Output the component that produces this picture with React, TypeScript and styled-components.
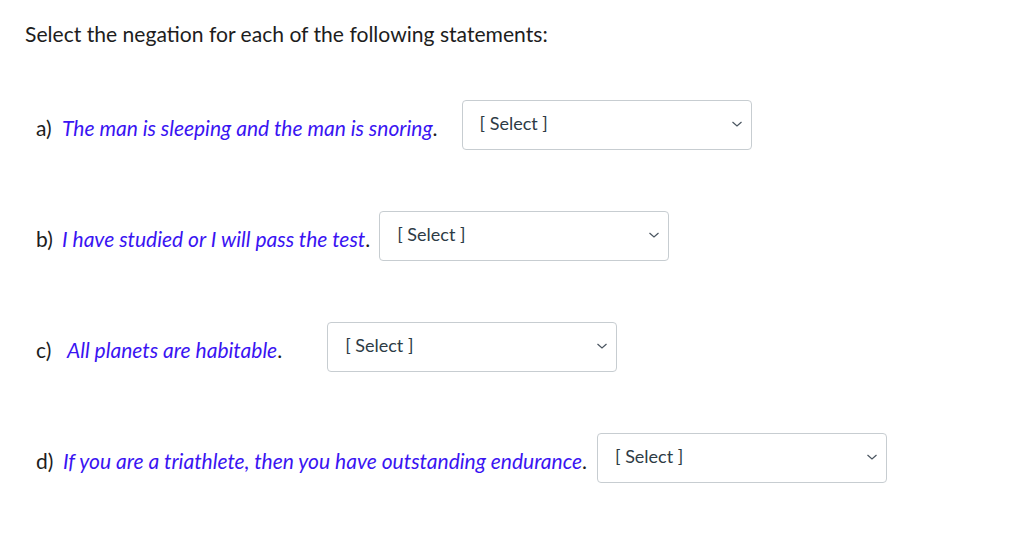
import React from "react";
import styled, { createGlobalStyle } from "styled-components";

const GlobalStyle = createGlobalStyle`
  html, body {
    margin: 0;
    padding: 0;
    background: #ffffff;
  }
  body {
    font-family: Lato, "Open Sans", "Liberation Sans", sans-serif;
    color: #2d3b45;
  }
`;

const Page = styled.div`
  padding: 22px 0 0 25px;
  display: flex;
  flex-direction: column;
`;

const Title = styled.div`
  font-size: 21.1px;
  line-height: 24px;
  color: #1d1d1d;
  margin-bottom: 54px;
`;

const List = styled.div`
  display: flex;
  flex-direction: column;
  gap: 61px;
  padding-left: 11px;
`;

const Row = styled.div`
  display: flex;
  align-items: flex-start;
`;

const Label = styled.div`
  display: flex;
  padding-top: 16px;
  font-size: 21px;
  line-height: 24px;
  color: #1d1d1d;
  white-space: nowrap;
`;

const Marker = styled.span<{ $w: number }>`
  display: inline-block;
  width: ${(p) => p.$w}px;
`;

const Statement = styled.em`
  font-style: italic;
  color: #3a14f2;
`;

const SelectBox = styled.div<{ $gap: number }>`
  box-sizing: border-box;
  margin-left: ${(p) => p.$gap}px;
  width: 290px;
  height: 50px;
  border: 1px solid #c7cdd1;
  border-radius: 4px;
  background: #ffffff;
  display: flex;
  align-items: flex-start;
  justify-content: space-between;
  padding: 10px 8px 0 17px;
  font-size: 18px;
  line-height: 24px;
  color: #2d3b45;
`;

const Chevron = styled.svg`
  margin-top: 9px;
  width: 12px;
  height: 8px;
`;

type Item = { key: string; text: string; marker: number; gap: number };

const items: Item[] = [
  { key: "a)", text: "The man is sleeping and the man is snoring", marker: 26, gap: 24 },
  { key: "b)", text: "I have studied or I will pass the test", marker: 26, gap: 9 },
  { key: "c)", text: "All planets are habitable", marker: 31, gap: 45 },
  { key: "d)", text: "If you are a triathlete, then you have outstanding endurance", marker: 27, gap: 10 },
];

const App = () => {
  return (
    <>
      <GlobalStyle />
      <Page>
        <Title>Select the negation for each of the following statements:</Title>
        <List>
          {items.map((item) => (
            <Row key={item.key}>
              <Label>
                <Marker $w={item.marker}>{item.key}</Marker>
                <span>
                  <Statement>{item.text}</Statement>.
                </span>
              </Label>
              <SelectBox $gap={item.gap}>
                <span>[ Select ]</span>
                <Chevron viewBox="0 0 12 8">
                  <path d="M1.5 2 L6 6 L10.5 2" fill="none" stroke="#4a5560" strokeWidth="1.2" />
                </Chevron>
              </SelectBox>
            </Row>
          ))}
        </List>
      </Page>
    </>
  );
};

export default App;
